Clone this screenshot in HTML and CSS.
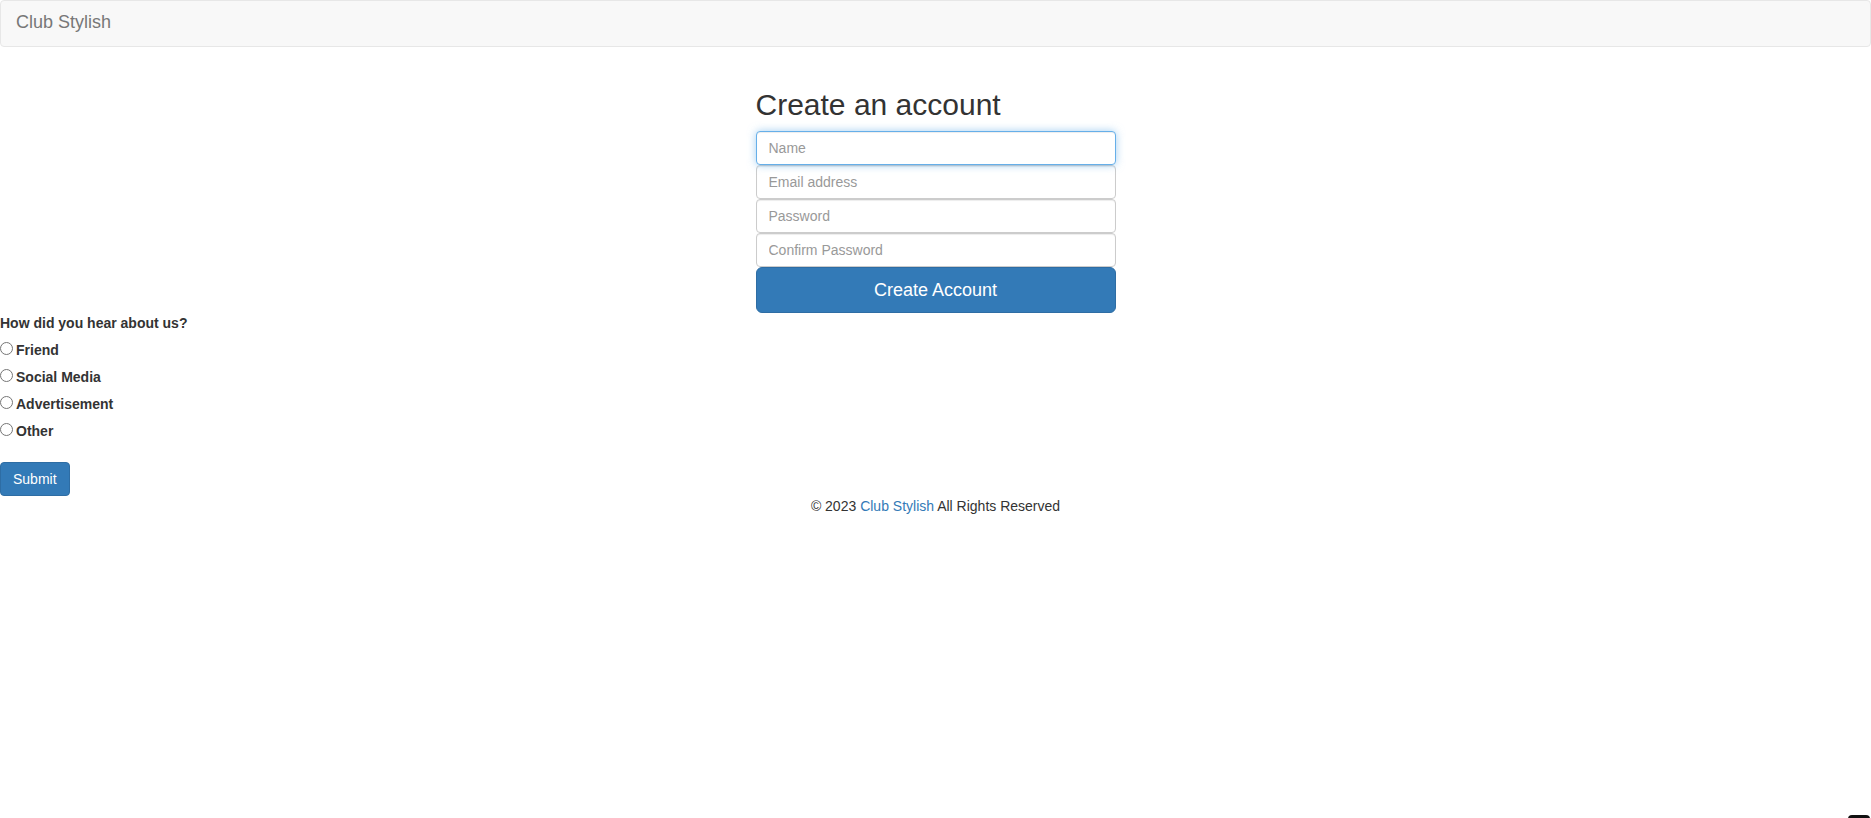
FILE: index.html
```html
<!DOCTYPE html>
<html lang="en">
<head>
<meta charset="utf-8">
<title>Club Stylish - Create an account</title>
<link rel="stylesheet" href="styles.css">
</head>
<body>
<nav class="navbar">
  <a class="navbar-brand" href="#">Club Stylish</a>
</nav>

<div class="signup">
  <h2 class="signup-heading">Create an account</h2>
  <input class="form-control is-focused first" type="text" placeholder="Name">
  <input class="form-control" type="email" placeholder="Email address">
  <input class="form-control" type="password" placeholder="Password">
  <input class="form-control" type="password" placeholder="Confirm Password">
  <button class="btn btn-primary btn-lg btn-block" type="button">Create Account</button>
</div>

<form class="survey">
  <label class="survey-question">How did you hear about us?</label>
  <label class="survey-option"><input type="radio" name="source" value="friend"> Friend</label>
  <label class="survey-option"><input type="radio" name="source" value="social"> Social Media</label>
  <label class="survey-option"><input type="radio" name="source" value="ad"> Advertisement</label>
  <label class="survey-option"><input type="radio" name="source" value="other"> Other</label>
  <button class="btn btn-primary btn-submit" type="button">Submit</button>
</form>

<footer class="footer">
  <p>© 2023 <a href="#">Club Stylish</a> All Rights Reserved</p>
</footer>

<div class="corner-mark"></div>
</body>
</html>
```

FILE: styles.css
```css
* {
  box-sizing: border-box;
}

html, body {
  margin: 0;
  padding: 0;
}

body {
  font-family: "Liberation Sans", Arial, Helvetica, sans-serif;
  font-size: 14px;
  line-height: 20px;
  color: #333;
  background: #fff;
}

a {
  color: #337ab7;
  text-decoration: none;
}

.navbar {
  height: 47px;
  background: #f8f8f8;
  border: 1px solid #e7e7e7;
  border-radius: 4px;
  margin-bottom: 21px;
}

.navbar-brand {
  display: inline-block;
  padding: 11px 15px;
  font-size: 18px;
  line-height: 20px;
  color: #777;
}

.signup {
  width: 360px;
  margin: 0 auto;
  padding-top: 20px;
}

.signup-heading {
  margin: 0 0 10px;
  font-size: 30px;
  line-height: 33px;
  font-weight: 500;
  color: #333;
}

.form-control {
  display: block;
  width: 100%;
  height: 34px;
  padding: 6px 12px;
  font-family: inherit;
  font-size: 14px;
  line-height: 20px;
  color: #555;
  background: #fff;
  border: 1px solid #ccc;
  border-radius: 4px;
  box-shadow: inset 0 1px 1px rgba(0, 0, 0, 0.075);
  outline: none;
  margin: 0;
}

.form-control::placeholder {
  color: #999;
}

.form-control.is-focused {
  border-color: #66afe9;
  box-shadow: inset 0 1px 1px rgba(0, 0, 0, 0.075), 0 0 8px rgba(102, 175, 233, 0.6);
  position: relative;
}

.btn {
  display: inline-block;
  font-family: inherit;
  font-size: 14px;
  line-height: 20px;
  padding: 6px 12px;
  border: 1px solid transparent;
  border-radius: 4px;
  cursor: pointer;
}

.btn-primary {
  color: #fff;
  background: #337ab7;
  border-color: #2e6da4;
}

.btn-lg {
  font-size: 18px;
  line-height: 24px;
  padding: 10px 16px;
  border-radius: 6px;
}

.btn-block {
  display: block;
  width: 100%;
}

.survey {
  display: flex;
  flex-direction: column;
  align-items: flex-start;
}

.survey-question {
  font-weight: bold;
  margin-bottom: 7px;
}

.survey-option {
  display: flex;
  align-items: flex-start;
  gap: 3px;
  font-weight: bold;
  margin-bottom: 7px;
}

.survey-option input {
  width: 13px;
  height: 13px;
  margin: 2px 0 0;
}

.btn-submit {
  margin-top: 14px;
  height: 34px;
}

.footer {
  text-align: center;
}

.footer p {
  margin: 0;
}

.corner-mark {
  position: fixed;
  right: 1px;
  bottom: -6px;
  width: 22px;
  height: 9px;
  background: #111;
  border-radius: 4px;
}
```
